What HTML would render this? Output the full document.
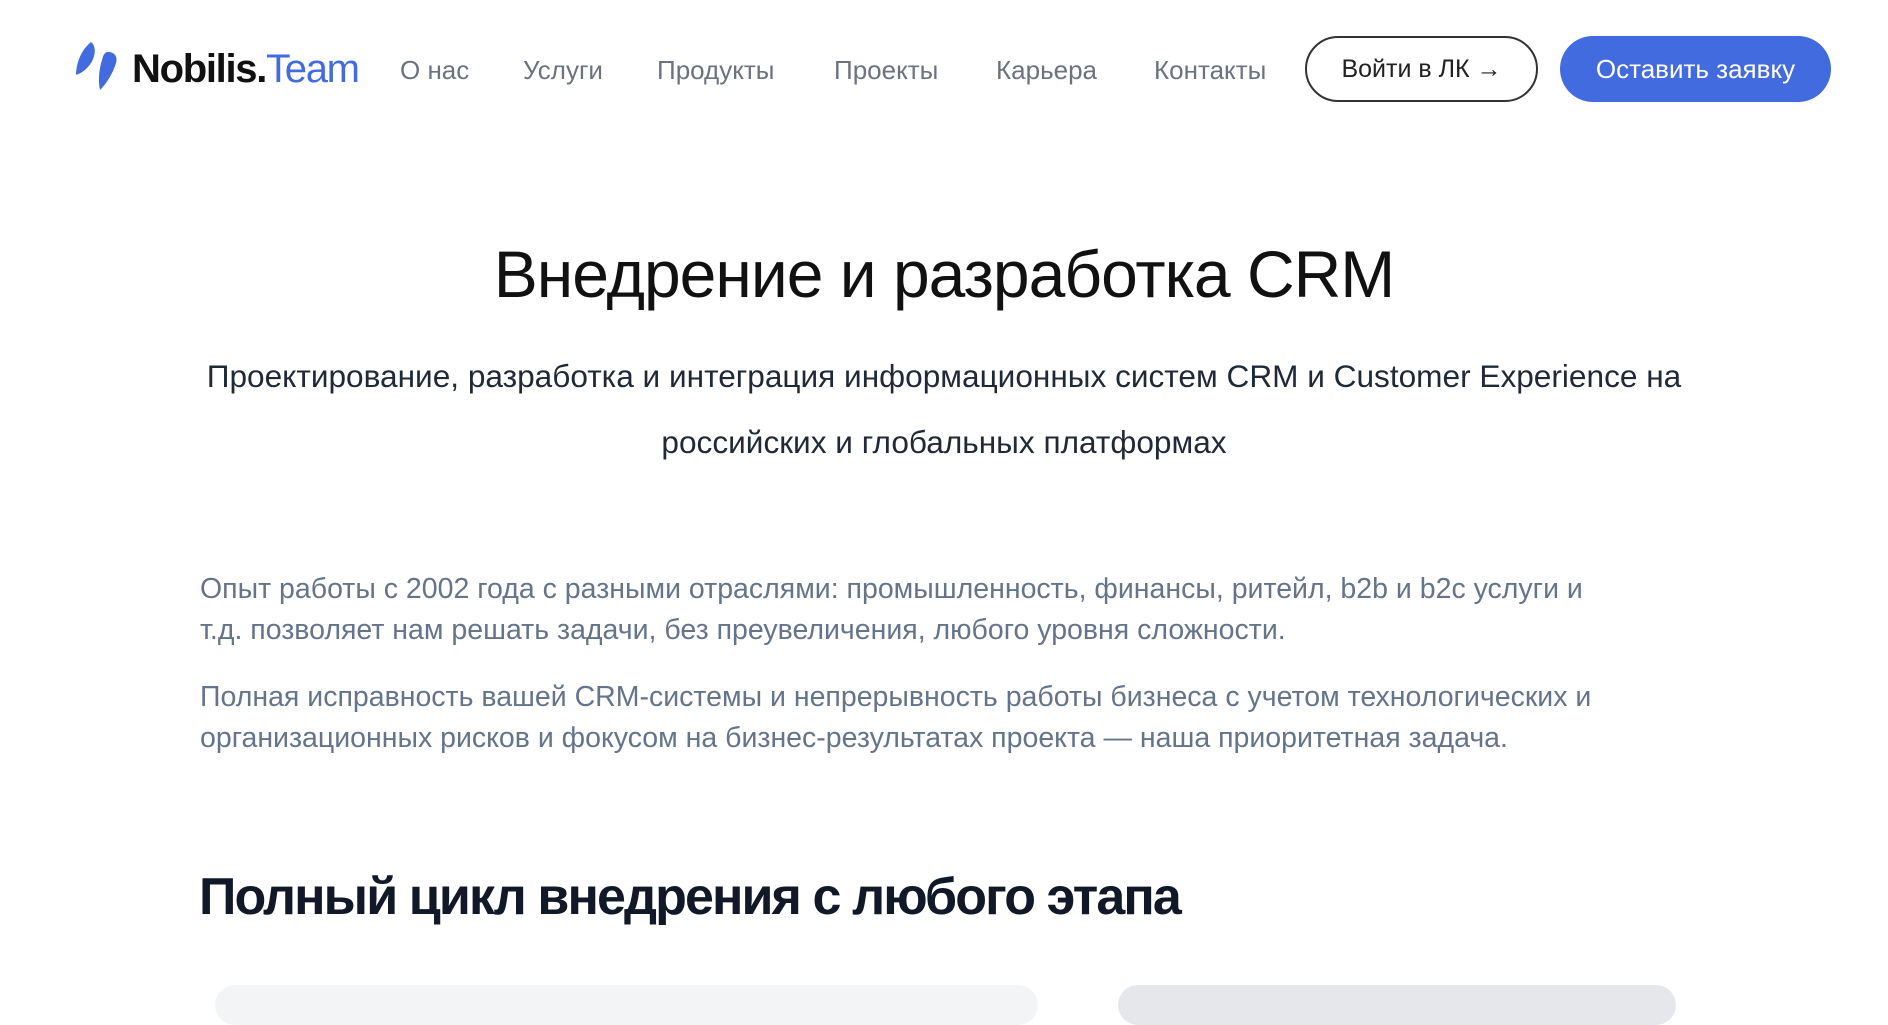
<!DOCTYPE html>
<html><head><meta charset="utf-8">
<style>
*{margin:0;padding:0;box-sizing:border-box}
body{width:1888px;height:995px;overflow:hidden;background:#fff;font-family:"Liberation Sans","DejaVu Sans",sans-serif;position:relative}
.abs{position:absolute;white-space:nowrap}
.nav{top:55px;font-size:26px;color:#6b7280}
.btn{position:absolute;top:36px;height:66px;border-radius:33px;font-size:25px;display:flex;align-items:center;justify-content:center}
p.t{position:absolute;left:200px;font-size:28.5px;line-height:41px;color:#64748b;white-space:nowrap}
</style></head><body>
<svg class="abs" style="left:74px;top:41px" width="46" height="50" viewBox="0 0 46 50">
<path d="M17 1 C22 5 22 14 17 22 C13 28 8 32 2 34 C2 24 6 10 17 1Z" fill="#436be0"/>
<path d="M34 11 C40 11 44 15 42 22 C39 32 33 42 26 49 C24 40 25 28 28 19 C29 14 31 11 34 11Z" fill="#436be0"/>
</svg>
<div class="abs" style="left:132px;top:47px;font-size:40px;letter-spacing:-1.3px;color:#111"><span style="font-weight:600">Nobilis.</span><span style="color:#436be0;font-weight:300">Team</span></div>
<div class="abs nav" style="left:400px">О нас</div>
<div class="abs nav" style="left:523px">Услуги</div>
<div class="abs nav" style="left:657px">Продукты</div>
<div class="abs nav" style="left:834px">Проекты</div>
<div class="abs nav" style="left:996px">Карьера</div>
<div class="abs nav" style="left:1154px">Контакты</div>
<div class="btn" style="left:1305px;width:233px;border:2px solid #333;color:#222">Войти в ЛК →</div>
<div class="btn" style="left:1560px;width:271px;background:#436be0;color:#fff;font-size:26px">Оставить заявку</div>
<div class="abs" style="left:0;width:1888px;text-align:center;top:236px;font-size:66px;color:#111;letter-spacing:-1px">Внедрение и разработка CRM</div>
<div class="abs" style="left:0;width:1888px;text-align:center;top:343px;font-size:31.6px;line-height:66px;color:#1f2937">Проектирование, разработка и интеграция информационных систем CRM и Customer Experience на<br>российских и глобальных платформах</div>
<p class="t" style="top:569px">Опыт работы с 2002 года с разными отраслями: промышленность, финансы, ритейл, b2b и b2c услуги и<br>т.д. позволяет нам решать задачи, без преувеличения, любого уровня сложности.</p>
<p class="t" style="top:677px">Полная исправность вашей CRM-системы и непрерывность работы бизнеса с учетом технологических и<br>организационных рисков и фокусом на бизнес-результатах проекта — наша приоритетная задача.</p>
<div class="abs" style="left:199px;top:867px;font-size:52px;font-weight:bold;color:#111827;letter-spacing:-1.9px">Полный цикл внедрения с любого этапа</div>
<div class="abs" style="left:215px;top:985px;width:823px;height:40px;border-radius:30px;background:#f3f4f6"></div>
<div class="abs" style="left:1118px;top:985px;width:558px;height:40px;border-radius:30px;background:#e5e7eb"></div>
</body></html>
